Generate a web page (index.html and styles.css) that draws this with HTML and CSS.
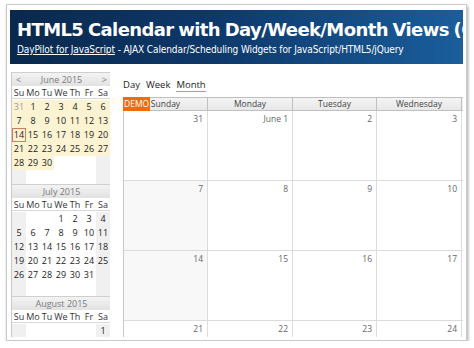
FILE: index.html
```html
<!DOCTYPE html>
<html>
<head>
<meta charset="utf-8">
<link rel="stylesheet" href="styles.css">
</head>
<body>
<div class="frame">
  <div class="inner">
    <header class="banner">
      <h1 class="title">HTML5 Calendar with Day/Week/Month Views (Open-Source)</h1>
      <p class="subtitle"><a class="sublink" href="#">DayPilot for JavaScript</a> - AJAX Calendar/Scheduling Widgets for JavaScript/HTML5/jQuery</p>
    </header>
    <div class="content">
      <aside class="nav">
        <div class="month">
          <div class="mhead"><span>&lt;</span><span>June 2015</span><span>&gt;</span></div>
          <div class="dow">Su</div><div class="dow">Mo</div><div class="dow">Tu</div><div class="dow">We</div><div class="dow">Th</div><div class="dow">Fr</div><div class="dow">Sa</div>
          <div class="d sel other">31</div><div class="d sel">1</div><div class="d sel">2</div><div class="d sel">3</div><div class="d sel">4</div><div class="d sel">5</div><div class="d sel">6</div>
          <div class="d sel">7</div><div class="d sel">8</div><div class="d sel">9</div><div class="d sel">10</div><div class="d sel">11</div><div class="d sel">12</div><div class="d sel">13</div>
          <div class="d sel today">14</div><div class="d sel">15</div><div class="d sel">16</div><div class="d sel">17</div><div class="d sel">18</div><div class="d sel">19</div><div class="d sel">20</div>
          <div class="d sel">21</div><div class="d sel">22</div><div class="d sel">23</div><div class="d sel">24</div><div class="d sel">25</div><div class="d sel">26</div><div class="d sel">27</div>
          <div class="d sel">28</div><div class="d sel">29</div><div class="d sel">30</div><div class="d"></div><div class="d"></div><div class="d"></div><div class="d we"></div>
          <div class="d we"></div><div class="d"></div><div class="d"></div><div class="d"></div><div class="d"></div><div class="d"></div><div class="d we"></div>
        </div>
        <div class="month">
          <div class="mhead center"><span>July 2015</span></div>
          <div class="dow">Su</div><div class="dow">Mo</div><div class="dow">Tu</div><div class="dow">We</div><div class="dow">Th</div><div class="dow">Fr</div><div class="dow">Sa</div>
          <div class="d we"></div><div class="d"></div><div class="d"></div><div class="d">1</div><div class="d">2</div><div class="d">3</div><div class="d we">4</div>
          <div class="d we">5</div><div class="d">6</div><div class="d">7</div><div class="d">8</div><div class="d">9</div><div class="d">10</div><div class="d we">11</div>
          <div class="d we">12</div><div class="d">13</div><div class="d">14</div><div class="d">15</div><div class="d">16</div><div class="d">17</div><div class="d we">18</div>
          <div class="d we">19</div><div class="d">20</div><div class="d">21</div><div class="d">22</div><div class="d">23</div><div class="d">24</div><div class="d we">25</div>
          <div class="d we">26</div><div class="d">27</div><div class="d">28</div><div class="d">29</div><div class="d">30</div><div class="d">31</div><div class="d we"></div>
          <div class="d we"></div><div class="d"></div><div class="d"></div><div class="d"></div><div class="d"></div><div class="d"></div><div class="d we"></div>
        </div>
        <div class="month">
          <div class="mhead center"><span>August 2015</span></div>
          <div class="dow">Su</div><div class="dow">Mo</div><div class="dow">Tu</div><div class="dow">We</div><div class="dow">Th</div><div class="dow">Fr</div><div class="dow">Sa</div>
          <div class="d we"></div><div class="d"></div><div class="d"></div><div class="d"></div><div class="d"></div><div class="d"></div><div class="d we">1</div>
        </div>
      </aside>
      <main class="main">
        <div class="tabs">
          <a class="tab" href="#">Day</a>
          <a class="tab" href="#">Week</a>
          <a class="tab active" href="#">Month</a>
        </div>
        <div class="cal">
          <div class="hcell first">Sunday<span class="demo">DEMO</span></div>
          <div class="hcell">Monday</div>
          <div class="hcell">Tuesday</div>
          <div class="hcell">Wednesday</div>
          <div class="hcell">Thursday</div>
          <div class="hcell">Friday</div>
          <div class="hcell">Saturday</div>

          <div class="cell">31</div><div class="cell">June 1</div><div class="cell">2</div><div class="cell">3</div><div class="cell">4</div><div class="cell">5</div><div class="cell wknd">6</div>
          <div class="cell wknd">7</div><div class="cell">8</div><div class="cell">9</div><div class="cell">10</div><div class="cell">11</div><div class="cell">12</div><div class="cell wknd">13</div>
          <div class="cell wknd">14</div><div class="cell">15</div><div class="cell">16</div><div class="cell">17</div><div class="cell">18</div><div class="cell">19</div><div class="cell wknd">20</div>
          <div class="cell">21</div><div class="cell">22</div><div class="cell">23</div><div class="cell">24</div><div class="cell">25</div><div class="cell">26</div><div class="cell wknd">27</div>
          <div class="cell">28</div><div class="cell">29</div><div class="cell">30</div><div class="cell">July 1</div><div class="cell">2</div><div class="cell">3</div><div class="cell wknd">4</div>
        </div>
      </main>
    </div>
  </div>
</div>
</body>
</html>
```

FILE: styles.css
```css
* { box-sizing: border-box; }
html, body { margin: 0; padding: 0; background: #fff; }
body { padding: 4px 0 0 6px; }

.frame {
  width: 461px;
  height: 337px;
  border: 1px solid #c9c9c9;
  padding: 5px 3px 3px 3px;
  background: #fff;
  box-shadow: 1px 2px 3px rgba(0,0,0,0.35);
}
.inner {
  width: 453px;
  height: 327px;
  overflow: hidden;
}

.banner {
  height: 54px;
  padding: 9px 0 0 7px;
  background: linear-gradient(to right, #0a284c 0%, #0e386a 45%, #1a5e9c 100%);
  color: #fff;
  overflow: hidden;
  white-space: nowrap;
}
.title {
  margin: 0;
  font-family: "DejaVu Sans", Verdana, sans-serif;
  font-weight: bold;
  font-size: 18px;
  line-height: 22px;
  letter-spacing: -0.6px;
  word-spacing: -1px;
}
.subtitle {
  margin: 3px 0 0 0;
  font-family: "DejaVu Sans Condensed", "DejaVu Sans", sans-serif;
  font-size: 10px;
  line-height: 12px;
  letter-spacing: -0.1px;
}
.sublink { color: #fff; text-decoration: underline; }

.content {
  display: flex;
  gap: 14px;
  margin-top: 8px;
  padding-left: 2px;
}

.nav {
  width: 98px;
  flex: none;
  font-family: "Open Sans", "DejaVu Sans", sans-serif;
  font-size: 9px;
  color: #222;
  border-left: 1px solid #c8c8c8;
  margin-left: -1px;
}
.month {
  display: grid;
  grid-template-columns: repeat(7, 14px);
  grid-auto-rows: 14px;
}
.mhead {
  grid-column: 1 / 8;
  height: 15px;
  display: flex;
  justify-content: space-between;
  align-items: center;
  padding: 0 3px 0 4px;
  color: #7a7a7a;
  background: linear-gradient(#f3f3f3, #e2e2e2);
  border-top: 1px solid #cfcfcf;
  border-bottom: 1px solid #d4d4d4;
}
.mhead.center { justify-content: center; }
.dow {
  height: 13px;
  line-height: 13px;
  text-align: center;
  color: #333;
  background: #fff;
  border-bottom: 1px solid #d8d8d8;
}
.d {
  text-align: center;
  line-height: 14px;
  background: #fff;
}
.d.we { background: #f0f0f0; }
.d.sel { background: #fcf3d2; }
.d.other { color: #9a9a9a; }
.d.today { box-shadow: inset 0 0 0 1px #d77a5c; }

.main {
  flex: none;
  width: 339px;
  font-family: "Open Sans", "DejaVu Sans", sans-serif;
}
.tabs {
  height: 25px;
  padding-top: 6px;
  display: flex;
  gap: 6px;
  font-size: 9.5px;
}
.tab {
  color: #222;
  text-decoration: none;
  line-height: 13px;
  height: 14px;
}
.tab.active { border-bottom: 1px solid #e8963a; }

.cal {
  width: 592px;
  display: grid;
  grid-template-columns: 84px 85px 84px 85px 84px 85px 85px;
  grid-template-rows: 13px repeat(5, 70px);
  border-top: 1px solid #c0c0c0;
  border-left: 1px solid #c8c8c8;
  font-size: 8.5px;
}
.hcell {
  position: relative;
  text-align: center;
  line-height: 12px;
  color: #444;
  background: linear-gradient(#f4f4f4, #e8e8e8);
  border-right: 1px solid #c0c0c0;
  border-bottom: 1px solid #c0c0c0;
}
.demo {
  position: absolute;
  left: -1px;
  top: -1px;
  height: 14px;
  padding: 0 1px;
  line-height: 14px;
  background: #ef6c0e;
  color: #fff;
  font-size: 8.5px;
}
.cell {
  text-align: right;
  padding: 2px 4px 0 0;
  color: #666;
  line-height: 12px;
  background: #fff;
  border-right: 1px solid #dcdcdc;
  border-bottom: 1px solid #dcdcdc;
}
.cell.wknd { background: #f8f8f8; }
```
